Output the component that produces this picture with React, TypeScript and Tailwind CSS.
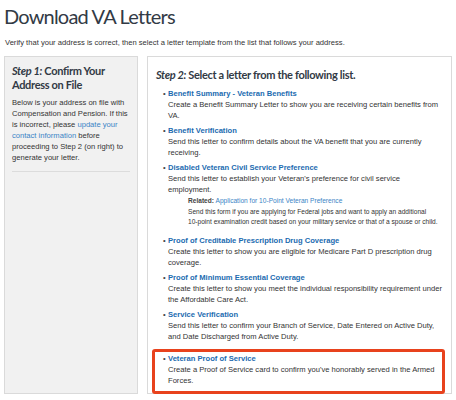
import React from 'react'

type Letter = {
  title: string
  desc: string
  related?: { link: string; text: React.ReactNode }
}

const letters: Letter[] = [
  {
    title: 'Benefit Summary - Veteran Benefits',
    desc: 'Create a Benefit Summary Letter to show you are receiving certain benefits from VA.',
  },
  {
    title: 'Benefit Verification',
    desc: 'Send this letter to confirm details about the VA benefit that you are currently receiving.',
  },
  {
    title: 'Disabled Veteran Civil Service Preference',
    desc: "Send this letter to establish your Veteran's preference for civil service employment.",
    related: {
      link: 'Application for 10-Point Veteran Preference',
      text: (
        <>
          Send this form if you are applying for Federal jobs and want to apply an additional{' '}
          <span className="whitespace-nowrap">10-point</span> examination credit based on your military service or that of a spouse or child.
        </>
      ),
    },
  },
  {
    title: 'Proof of Creditable Prescription Drug Coverage',
    desc: 'Create this letter to show you are eligible for Medicare Part D prescription drug coverage.',
  },
  {
    title: 'Proof of Minimum Essential Coverage',
    desc: 'Create this letter to show you meet the individual responsibility requirement under the Affordable Care Act.',
  },
  {
    title: 'Service Verification',
    desc: 'Send this letter to confirm your Branch of Service, Date Entered on Active Duty, and Date Discharged from Active Duty.',
  },
]

const highlighted: Letter = {
  title: 'Veteran Proof of Service',
  desc: "Create a Proof of Service card to confirm you've honorably served in the Armed Forces.",
}

function LetterBody({ letter }: { letter: Letter }) {
  return (
    <div className="flex">
      <span className="w-[5px] shrink-0 text-[#444]">•</span>
      <div className="min-w-0">
        <a className="block font-bold text-[#1b6bb0]">{letter.title}</a>
        <p>{letter.desc}</p>
        {letter.related && (
          <div className="mt-[1px] mb-[3px] pl-[20px] -mr-[4px] text-[6.6px] leading-[10.5px]">
            <p>
              <span className="font-bold text-[#444]">Related:</span>{' '}
              <a className="text-[#3a84c6]">{letter.related.link}</a>
            </p>
            <p>{letter.related.text}</p>
          </div>
        )}
      </div>
    </div>
  )
}

export default function App() {
  return (
    <div className="w-[456px] h-[400px] overflow-hidden bg-white pl-[4px] text-[#333]">
      <h1 className="pt-[4px] text-[20px] leading-[24px] text-[#323a45] font-['Lato',sans-serif] tracking-[-0.04em]">
        Download VA Letters
      </h1>
      <p className="mt-[10px] pl-[1px] text-[7.6px] leading-[10px] font-['Liberation_Sans',Arial,sans-serif]">
        Verify that your address is correct, then select a letter template from the list that follows your address.
      </p>

      <div className="mt-[8px] flex gap-[9px] h-[338px] font-['Liberation_Sans',Arial,sans-serif] text-[7.6px] leading-[11px]">
        {/* step 1 */}
        <div className="w-[134px] shrink-0 bg-[#f1f1f1] border border-[#dadada] px-[7px]">
          <div className="border-b border-[#dcdcdc] pt-[7px] pb-[8px]">
            <h3 className="font-['Lato',sans-serif] font-bold text-[11px] leading-[14px] text-[#323a45] tracking-[-0.03em]">
              <em>Step 1:</em> Confirm Your Address on File
            </h3>
            <p className="mt-[5px]">
              Below is your address on file with Compensation and Pension. If this is incorrect, please{' '}
              <a className="text-[#3a84c6]">update your contact information</a> before proceeding to Step 2 (on right) to generate your letter.
            </p>
          </div>
        </div>

        {/* step 2 */}
        <div className="w-[305px] shrink-0 bg-white border border-[#dadada] pl-[8px] pr-[6px]">
          <h3 className="pt-[11px] font-['Lato',sans-serif] font-bold text-[11px] leading-[14px] text-[#323a45] tracking-[-0.03em]">
            <em>Step 2:</em> Select a letter from the following list.
          </h3>
          <ul className="mt-[6px] flex flex-col gap-[4px]">
            {letters.map((l) => (
              <li key={l.title} className="pl-[7px]">
                <LetterBody letter={l} />
              </li>
            ))}
            <li className="-ml-[4px] mt-[3px] border-[3px] border-[#e8421d] rounded-[3px] pl-[8px] pt-[1px] pb-[5px]">
              <LetterBody letter={highlighted} />
            </li>
          </ul>
        </div>
      </div>
    </div>
  )
}
